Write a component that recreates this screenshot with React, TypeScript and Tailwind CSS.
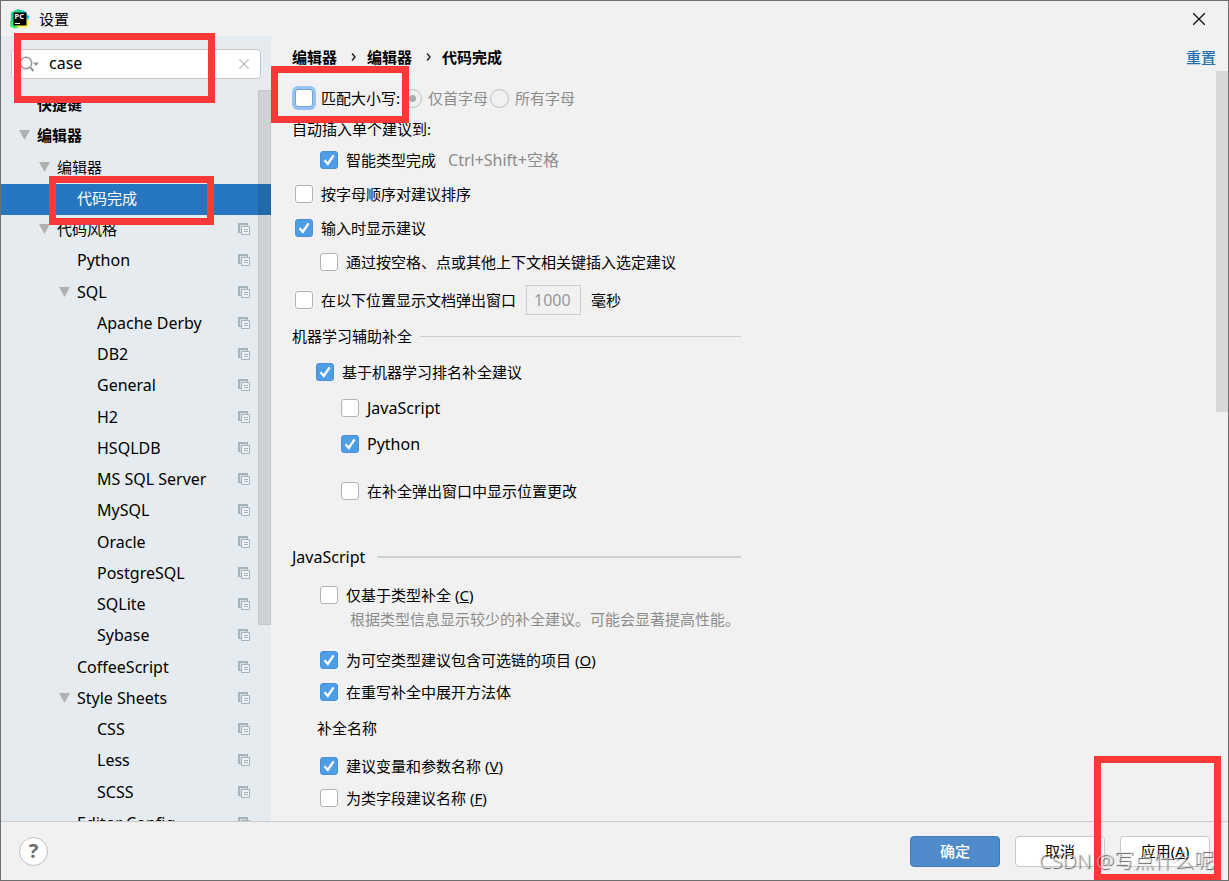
import { useState } from "react";

type TreeItem = {
  label: string;
  level: 0 | 1 | 2 | 3;
  open?: boolean;
  copy?: boolean;
  bold?: boolean;
};

const TREE: TreeItem[] = [
  { label: "快捷键", level: 0, bold: true },
  { label: "编辑器", level: 0, open: true, bold: true },
  { label: "编辑器", level: 1, open: true },
  { label: "代码完成", level: 2 },
  { label: "代码风格", level: 1, open: true, copy: true },
  { label: "Python", level: 2, copy: true },
  { label: "SQL", level: 2, open: true, copy: true },
  { label: "Apache Derby", level: 3, copy: true },
  { label: "DB2", level: 3, copy: true },
  { label: "General", level: 3, copy: true },
  { label: "H2", level: 3, copy: true },
  { label: "HSQLDB", level: 3, copy: true },
  { label: "MS SQL Server", level: 3, copy: true },
  { label: "MySQL", level: 3, copy: true },
  { label: "Oracle", level: 3, copy: true },
  { label: "PostgreSQL", level: 3, copy: true },
  { label: "SQLite", level: 3, copy: true },
  { label: "Sybase", level: 3, copy: true },
  { label: "CoffeeScript", level: 2, copy: true },
  { label: "Style Sheets", level: 2, open: true, copy: true },
  { label: "CSS", level: 3, copy: true },
  { label: "Less", level: 3, copy: true },
  { label: "SCSS", level: 3, copy: true },
  { label: "Editor Config", level: 2, copy: true },
];

const INDENT = ["pl-[17px]", "pl-[37px]", "pl-[57px]", "pl-[77px]"];

// Latin labels look smaller than the Chinese ones at the same size
const sizeOf = (label: string) => (/^[\x20-\x7e]+$/.test(label) ? "text-base" : "text-[15px]");

export default function App() {
  return (
    <div className="relative flex h-screen flex-col overflow-hidden border border-[#6f6f6f] bg-[#f1f1f1] font-['Noto_Sans','Noto_Sans_CJK_SC',sans-serif] text-[15px] leading-6 text-black">
      <header className="flex h-[35px] shrink-0 items-center pl-[9px] pr-[23px]">
        <PyCharmLogo />
        <h1 className="ml-[9px] flex-1">设置</h1>
        <button aria-label="关闭">
          <svg viewBox="0 0 12 12" className="h-3 w-3" fill="none" stroke="#111" strokeWidth="1.3">
            <path d="M0 0l12 12M12 0L0 12" />
          </svg>
        </button>
      </header>

      <div className="flex min-h-0 flex-1">
        <Sidebar />
        <Settings />
      </div>

      <footer className="flex h-[59px] shrink-0 items-center border-t border-[#cdcdcd] px-[18px]">
        <button
          aria-label="帮助"
          className="flex h-[29px] w-[29px] items-center justify-center rounded-full border border-[#c0c0c0] bg-white text-xl font-bold text-[#6e6e6e]"
        >
          ?
        </button>
        <div className="ml-auto flex gap-[15px]">
          <button className="h-[31px] w-[90px] rounded-[4px] border border-[#3f7cbd] bg-[#4f8bca] font-medium text-white">
            确定
          </button>
          <button className="h-[31px] w-[90px] rounded-[4px] border border-[#c8c8c8] bg-white">取消</button>
          <button className="h-[31px] w-[90px] rounded-[4px] border border-[#c8c8c8] bg-white">
            应用(<u>A</u>)
          </button>
        </div>
      </footer>

      <Highlight className="left-[13px] top-8 h-[70px] w-[201px]" />
      <Highlight className="left-12 top-[175px] h-[49px] w-[165px]" />
      <Highlight className="left-[270px] top-[65px] h-[57px] w-[138px]" />
      <Highlight className="bottom-[-1px] right-[7px] h-[125px] w-[127px]" />
      <p className="pointer-events-none absolute bottom-[7px] right-[14px] text-xl font-light leading-6 text-[#e8e8e8]/70 [text-shadow:1px_1px_1px_#000000a0]">
        CSDN @写点什么呢
      </p>
    </div>
  );
}

function Sidebar() {
  const [query, setQuery] = useState("case");
  const [selected, setSelected] = useState(3);

  return (
    <aside className="flex w-[270px] shrink-0 flex-col bg-[#e6ebef]">
      <div className="px-[10px] pb-[11px] pt-[13px]">
        <div className="flex h-[30px] items-center rounded-[4px] border border-[#c4c7c9] bg-white pl-2 pr-[11px]">
          <SearchIcon />
          <input
            aria-label="搜索设置"
            value={query}
            onChange={(e) => setQuery(e.target.value)}
            className="ml-[9px] min-w-0 flex-1 bg-transparent pb-[2px] text-base outline-none"
          />
          <button aria-label="清除" onClick={() => setQuery("")}>
            <svg viewBox="0 0 10 10" className="h-[10px] w-[10px]" fill="none" stroke="#b4babf" strokeWidth="1.2">
              <path d="M0 0l10 10M10 0L0 10" />
            </svg>
          </button>
        </div>
      </div>

      <nav className="relative min-h-0 flex-1 overflow-hidden">
        <ul className="grid min-h-[750px] auto-rows-fr">
          {TREE.map((item, i) => (
            <li key={i}>
              <button
                onClick={() => setSelected(i)}
                className={`flex h-full w-full items-center pb-[3px] pr-[21px] text-left ${INDENT[item.level]} ${
                  i === selected ? "bg-[#2675bf] text-white" : ""
                }`}
              >
                <span className="w-5 shrink-0 pl-px">{item.open && <Triangle />}</span>
                <span className={`-ml-px flex-1 truncate ${sizeOf(item.label)} ${item.bold ? "font-bold" : ""}`}>
                  {item.label}
                </span>
                {item.copy && <CopyIcon />}
              </button>
            </li>
          ))}
        </ul>
        <div className="absolute right-0 top-0 h-[535px] w-[13px] border border-black/5 bg-black/10" />
      </nav>
    </aside>
  );
}

function Settings() {
  return (
    <main className="relative min-w-0 flex-1 overflow-hidden pl-[21px] pr-3">
      <div className="flex items-center pt-[9px] font-bold">
        <span>编辑器</span>
        <Crumb />
        <span>编辑器</span>
        <Crumb />
        <span>代码完成</span>
        <a href="#reset" className="ml-auto font-medium text-[#2470b3]">
          重置
        </a>
      </div>

      <div className="mt-[17px] flex h-6 items-center">
        <Check label="匹配大小写:" className="ml-[3px]" focused />
        <Radio label="仅首字母" className="ml-[3px]" checked />
        <Radio label="所有字母" className="ml-[2px]" />
      </div>
      <p className="mt-[7px]">自动插入单个建议到:</p>
      <div className="mt-[7px] flex items-center">
        <Check label="智能类型完成" className="ml-7" checked />
        <span className="ml-3 text-base text-[#8c8c8c]">Ctrl+Shift+空格</span>
      </div>
      <Check label="按字母顺序对建议排序" className="ml-[3px] mt-[10px]" />
      <Check label="输入时显示建议" className="ml-[3px] mt-[10px]" checked />
      <Check label="通过按空格、点或其他上下文相关键插入选定建议" className="ml-7 mt-[10px]" />
      <div className="mt-[14px] flex h-6 items-center">
        <Check label="在以下位置显示文档弹出窗口" className="ml-[3px]" />
        <input
          aria-label="延迟"
          defaultValue="1000"
          disabled
          className="ml-[10px] h-[30px] w-[55px] border border-[#cdcdcd] px-[7px] text-base text-[#999]"
        />
        <span className="ml-[10px]">毫秒</span>
      </div>

      <h2 className="mt-3 flex w-[449px] items-center gap-2">
        机器学习辅助补全
        <span className="h-px flex-1 bg-[#d0d0d0]" />
      </h2>
      <Check label="基于机器学习排名补全建议" className="ml-6 mt-3" checked />
      <Check label="JavaScript" className="ml-[49px] mt-3" />
      <Check label="Python" className="ml-[49px] mt-3" checked />
      <Check label="在补全弹出窗口中显示位置更改" className="ml-[49px] mt-[23px]" />

      <h2 className="mt-[42px] flex w-[449px] items-center gap-3 text-base">
        JavaScript
        <span className="h-[2px] flex-1 bg-[#d0d0d0]" />
      </h2>
      <Check label="仅基于类型补全" hotkey="C" className="ml-7 mt-[14px]" />
      <p className="ml-[58px] text-[#8c8c8c]">根据类型信息显示较少的补全建议。可能会显著提高性能。</p>
      <Check label="为可空类型建议包含可选链的项目" hotkey="O" className="ml-7 mt-[17px]" checked />
      <Check label="在重写补全中展开方法体" className="ml-7 mt-2" checked />
      <h3 className="ml-[25px] mt-3">补全名称</h3>
      <Check label="建议变量和参数名称" hotkey="V" className="ml-7 mt-[14px]" checked />
      <Check label="为类字段建议名称" hotkey="F" className="ml-7 mt-2" />

      <div className="absolute right-0 top-[35px] h-[341px] w-3 bg-black/10" />
    </main>
  );
}

type CheckProps = {
  label: string;
  className: string;
  hotkey?: string;
  checked?: boolean;
  focused?: boolean;
};

function Check({ label, className, hotkey, checked, focused }: CheckProps) {
  return (
    <label className={`flex w-fit items-center gap-2 whitespace-nowrap ${className}`}>
      <span className="relative h-[18px] w-[18px] shrink-0">
        <input
          type="checkbox"
          defaultChecked={checked}
          className={`peer block h-[18px] w-[18px] appearance-none rounded-[3px] border bg-white checked:border-[#4a90d5] checked:bg-[#4e9de7] ${
            focused ? "border-[#7b9fcf] ring-3 ring-[#97c3f3]" : "border-[#b3b3b3]"
          }`}
        />
        <svg
          viewBox="0 0 18 18"
          className="pointer-events-none absolute inset-0 hidden h-[18px] w-[18px] peer-checked:block"
          fill="none"
          stroke="#fff"
          strokeWidth="2.4"
        >
          <path d="M4.5 9.3l3.3 3.6L13.6 4.4" />
        </svg>
      </span>
      <span className={sizeOf(label)}>
        {label}
        {hotkey && (
          <>
            {" "}
            (<u>{hotkey}</u>)
          </>
        )}
      </span>
    </label>
  );
}

function Radio({ label, className, checked }: { label: string; className: string; checked?: boolean }) {
  return (
    <label className={`flex items-center gap-[6px] whitespace-nowrap text-[#8c8c8c] ${className}`}>
      <span className="relative flex h-[19px] w-[19px] items-center justify-center">
        <input
          type="radio"
          name="case"
          defaultChecked={checked}
          disabled
          className="peer block h-[19px] w-[19px] appearance-none rounded-full border border-[#c0c0c0]"
        />
        <span className="absolute hidden h-[7px] w-[7px] rounded-full bg-[#ababab] peer-checked:block" />
      </span>
      {label}
    </label>
  );
}

function Highlight({ className }: { className: string }) {
  return <div className={`pointer-events-none absolute border-7 border-[#fc3838] ${className}`} />;
}

function Crumb() {
  return (
    <svg viewBox="0 0 30 10" className="h-[10px] w-[30px]" fill="none" stroke="#222" strokeWidth="1.4">
      <path d="M15 1.5l3 3.5-3 3.5" />
    </svg>
  );
}

function Triangle() {
  return (
    <svg viewBox="0 0 11 10" className="h-[10px] w-[11px]" fill="#b1b1b1">
      <path d="M0 0h11L5.5 10z" />
    </svg>
  );
}

function SearchIcon() {
  return (
    <svg viewBox="0 0 20 16" className="h-4 w-5 shrink-0" fill="none" stroke="#8f979c" strokeWidth="1.5">
      <circle cx="6" cy="7" r="5.7" />
      <path d="M10 11l3.600 4" strokeWidth="2" />
      <path d="M13 6.500h6l-3 3.600z" fill="#8f979c" stroke="none" />
    </svg>
  );
}

function CopyIcon() {
  return (
    <svg viewBox="0 0 12 12" className="h-3 w-3 shrink-0">
      <path d="M0 0h10v3H3v7H0z" fill="#a7b3bb" />
      <path d="M2 2h7v1H3v6H2z" fill="#d5dce1" />
      <path d="M3.5 3.5h8v8h-8z" fill="#eef2f4" stroke="#a7b3bb" />
      <path d="M6 6.5h4M6 8.5h4" stroke="#a7b3bb" />
    </svg>
  );
}

function PyCharmLogo() {
  return (
    <svg viewBox="0 0 20 20" className="h-5 w-5 shrink-0">
      <path d="M1 3.5L8 0l6 2-4 9-6 8-3.500-1.500z" fill="#21d789" />
      <path d="M12 1l4 2 1 3 2.500 1-2 5-6-4z" fill="#07c3f2" />
      <path d="M16 8l3.500 6-3 5-4-1-8 1.500L8 15z" fill="#fcf84a" />
      <path d="M0 12l5 3 3 4-4 .5-3.500-2z" fill="#3bea62" />
      <path d="M3.500 3.500h13v13h-13z" fill="#000" />
      <text x="4.500" y="10" fontSize="7.5" fontWeight="700" fill="#fff">
        PC
      </text>
      <path d="M5 14h5v1H5z" fill="#fff" />
    </svg>
  );
}
